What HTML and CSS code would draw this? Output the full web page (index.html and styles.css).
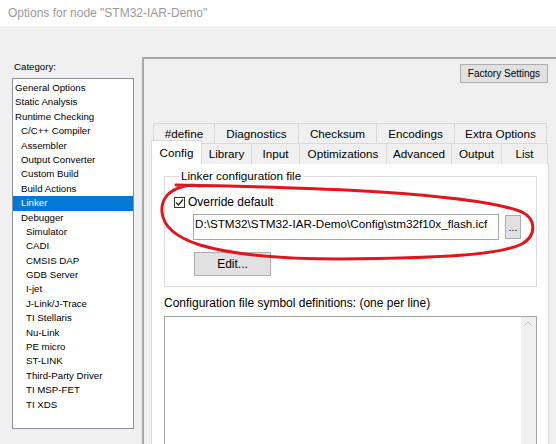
FILE: index.html
```html
<!DOCTYPE html>
<html>
<head>
<meta charset="utf-8">
<link rel="stylesheet" href="styles.css">
</head>
<body>
<div class="titlebar">Options for node "STM32-IAR-Demo"</div>
<div class="main">
  <div class="left">
    <div class="cat-label">Category:</div>
    <div class="listbox">
      <div class="item l1">General Options</div>
      <div class="item l1">Static Analysis</div>
      <div class="item l1">Runtime Checking</div>
      <div class="item l2">C/C++ Compiler</div>
      <div class="item l2">Assembler</div>
      <div class="item l2">Output Converter</div>
      <div class="item l2">Custom Build</div>
      <div class="item l2">Build Actions</div>
      <div class="item l2 sel">Linker</div>
      <div class="item l2">Debugger</div>
      <div class="item l3">Simulator</div>
      <div class="item l3">CADI</div>
      <div class="item l3">CMSIS DAP</div>
      <div class="item l3">GDB Server</div>
      <div class="item l3">I-jet</div>
      <div class="item l3">J-Link/J-Trace</div>
      <div class="item l3">TI Stellaris</div>
      <div class="item l3">Nu-Link</div>
      <div class="item l3">PE micro</div>
      <div class="item l3">ST-LINK</div>
      <div class="item l3">Third-Party Driver</div>
      <div class="item l3">TI MSP-FET</div>
      <div class="item l3">TI XDS</div>
    </div>
  </div>
  <div class="panel">
    <div class="btn factory">Factory Settings</div>
    <div class="tabs">
      <div class="tabrow row1">
        <div class="tab">#define</div>
        <div class="tab">Diagnostics</div>
        <div class="tab">Checksum</div>
        <div class="tab">Encodings</div>
        <div class="tab">Extra Options</div>
      </div>
      <div class="tabrow row2">
        <div class="tab active">Config</div>
        <div class="tab">Library</div>
        <div class="tab">Input</div>
        <div class="tab">Optimizations</div>
        <div class="tab">Advanced</div>
        <div class="tab">Output</div>
        <div class="tab">List</div>
      </div>
      <div class="tabbody">
        <div class="group">
          <div class="legend">Linker configuration file</div>
          <div class="checkrow">
            <span class="checkbox"><svg width="9" height="9" viewBox="0 0 9 9"><path d="M1 4.5 L3.5 7 L8 1.5" fill="none" stroke="#222" stroke-width="1.2"/></svg></span>
            <span>Override default</span>
          </div>
          <div class="pathrow">
            <div class="field">D:\STM32\STM32-IAR-Demo\Config\stm32f10x_flash.icf</div>
            <div class="btn browse">...</div>
          </div>
          <div class="btn edit">Edit...</div>
        </div>
        <div class="deflabel">Configuration file symbol definitions: (one per line)</div>
        <div class="textarea">
          <div class="scrollbar">
            <svg width="14" height="14" viewBox="0 0 14 14"><path d="M3.5 8.5 L7 5 L10.5 8.5" fill="none" stroke="#c2c2c2" stroke-width="1"/></svg>
          </div>
        </div>
      </div>
    </div>
  </div>
</div>
<svg class="annot" width="556" height="444" viewBox="0 0 556 444">
  <path d="M176,185 C230,186 320,188 380,192 C440,196 500,203 522,212 C536,219 537,235 522,244 C500,255 440,258 340,259 C280,259 230,254 200,245 C175,237 163,225 162,212 C161,200 168,190 185,186 C190,185 195,185 200,186" fill="none" stroke="#e3141c" stroke-width="3" stroke-linecap="round" stroke-linejoin="round"/>
</svg>
</body>
</html>
```
FILE: styles.css
```css
* { box-sizing: border-box; }
html, body { margin: 0; padding: 0; }
body {
  width: 556px;
  height: 444px;
  overflow: hidden;
  background: #f0f0f0;
  font-family: "Liberation Sans", Arial, sans-serif;
  color: #000;
  position: relative;
}
.titlebar {
  height: 26px;
  background: #fff;
  padding-left: 8px;
  font-size: 12px;
  line-height: 26px;
  color: #9a9a9a;
}
.main {
  display: flex;
  height: 418px;
}
.left {
  width: 142px;
  flex: none;
  padding: 34px 0 0 12px;
}
.cat-label {
  font-size: 9.7px;
  line-height: 14px;
  padding-left: 2px;
  margin-bottom: 4px;
}
.listbox {
  width: 122px;
  height: 351px;
  background: #fff;
  border: 1px solid #8c8f96;
  padding-top: 2px;
  font-size: 9.7px;
}
.item {
  height: 14.4px;
  line-height: 14.4px;
  white-space: nowrap;
}
.l1 { padding-left: 2px; }
.l2 { padding-left: 8px; }
.l3 { padding-left: 13px; }
.item.sel { background: #0078d7; color: #fff; }

.panel {
  flex: none;
  width: 440px;
  margin-top: 31px;
  height: 420px;
  border: 1px solid #a0a0a0;
  border-width: 2px 0 0 2px;
  border-color: #a8a8a8;
  padding: 5px 0 0 7px;
}
.btn {
  background: #e1e1e1;
  border: 1px solid #adadad;
  text-align: center;
  font-size: 10px;
}
.factory {
  width: 88px;
  height: 19px;
  line-height: 17px;
  margin-left: 309px;
}
.tabs {
  margin-top: 40px;
  width: 398px;
  font-size: 11.7px;
}
.tabrow {
  display: grid;
  height: 20px;
}
.row1 {
  grid-template-columns: 62px 84px 78px 78px 92px;
  margin-left: 2px;
}
.row2 {
  grid-template-columns: 51px 50px 48px 87px 65px 50px 46px;
}
.tab {
  border: 1px solid #d9d9d9;
  border-bottom: none;
  border-left: none;
  background: #f0f0f0;
  text-align: center;
  line-height: 19px;
  white-space: nowrap;
}
.tab:first-child { border-left: 1px solid #d9d9d9; }
.row2 .tab.active {
  background: #fff;
  margin-top: -3px;
  height: 24px;
  line-height: 23px;
  z-index: 2;
  border-color: #d9d9d9;
}
.tabbody {
  background: #fff;
  border: 1px solid #d9d9d9;
  height: 300px;
  padding: 12px 11px 0 12px;
  font-size: 12px;
}
.group {
  border: 1px solid #dcdcdc;
  height: 111px;
  padding-left: 9px;
}
.legend {
  width: max-content;
  margin: -8px 0 0 5px;
  padding: 0 2px;
  background: #fff;
  line-height: 14px;
  font-size: 11.7px;
}
.checkrow {
  display: flex;
  align-items: center;
  gap: 3px;
  margin-top: 12px;
  height: 14px;
  font-size: 12px;
}
.checkbox {
  width: 11px;
  height: 11px;
  border: 1px solid #333;
  background: #fff;
  display: flex;
  align-items: center;
  justify-content: center;
}
.pathrow {
  display: flex;
  align-items: center;
  margin-top: 5px;
  margin-left: 19px;
}
.field {
  width: 306px;
  height: 26px;
  border: 1px solid #a6a6a6;
  background: #fff;
  padding: 1px 0 0 1px;
  font-size: 11.7px;
  line-height: 16px;
  white-space: nowrap;
}
.browse {
  width: 16px;
  height: 24px;
  margin-left: 6px;
  line-height: 24px;
  font-size: 10px;
}
.edit {
  width: 77px;
  height: 24px;
  line-height: 22px;
  margin: 12px 0 0 20px;
  font-size: 12px;
}
.deflabel {
  margin-top: 9px;
  line-height: 14px;
  font-size: 12px;
}
.textarea {
  margin-top: 6px;
  width: 373px;
  height: 140px;
  border: 1px solid #a6a6a6;
  background: #fff;
  display: flex;
  justify-content: flex-end;
}
.scrollbar {
  width: 15px;
  background: #f0f0f0;
  height: 100%;
}
.annot {
  position: absolute;
  left: 0;
  top: 0;
  pointer-events: none;
}
```
